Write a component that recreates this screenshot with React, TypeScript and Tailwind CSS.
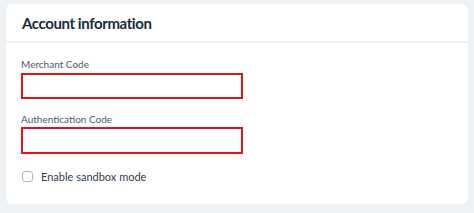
export default function App() {
  return (
    <div className="h-[213px] w-[474px] bg-[#eef2f5] pl-[6px] pr-[6px] pt-[4px] font-['Lato',sans-serif]">
      <div className="h-[200px] w-[462px] rounded-[6px] bg-white">
        <div className="flex h-[39px] items-center border-b-2 border-[#eef2f5] px-4 pt-[2px]">
          <h2 className="text-[15px] font-bold leading-none tracking-[-0.4px] text-[#162d3d]">Account information</h2>
        </div>
        <div className="px-[15px] pt-[15px]">
          <label className="block text-[10px] leading-[12px] text-[#4a5a6a]">Merchant Code</label>
          <div className="mt-[3px] h-[26px] w-[222px] border-2 border-[#e1141c] bg-white" />
          <label className="mt-[14px] block text-[10px] leading-[12px] text-[#4a5a6a]">Authentication Code</label>
          <div className="mt-[2px] h-[27px] w-[222px] border-2 border-[#e1141c] bg-white" />
          <div className="mt-[16px] flex h-[13px] items-center gap-[8px] pl-[1px]">
            <span className="h-[11px] w-[11px] rounded-[3px] border border-[#a8bccd]" />
            <span className="text-[11px] leading-[13px] text-[#32404e]">Enable sandbox mode</span>
          </div>
        </div>
      </div>
    </div>
  );
}
